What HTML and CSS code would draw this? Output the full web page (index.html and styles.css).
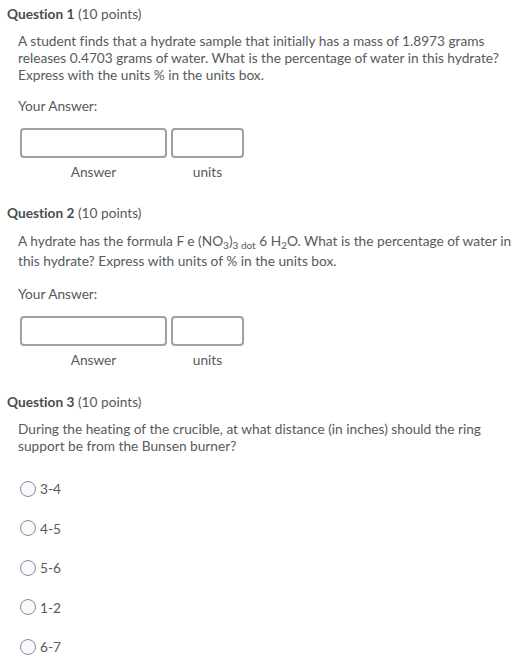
FILE: index.html
```html
<!DOCTYPE html>
<html>
<head>
<meta charset="utf-8">
<link rel="stylesheet" href="styles.css">
</head>
<body>
<div class="page">
  <section class="q q1">
    <h2 class="q-title"><b>Question 1</b> (10 points)</h2>
    <p class="q-text">A student finds that a hydrate sample that initially has a mass of 1.8973 grams releases 0.4703 grams of water. What is the percentage of water in this hydrate? Express with the units % in the units box.</p>
    <div class="your">Your Answer:</div>
    <div class="answer-row">
      <div class="field"><div class="box box-main"></div><div class="cap">Answer</div></div>
      <div class="field"><div class="box box-units"></div><div class="cap">units</div></div>
    </div>
  </section>
  <section class="q q2">
    <h2 class="q-title"><b>Question 2</b> (10 points)</h2>
    <p class="q-text tall">A hydrate has the formula F e (NO<sub>3</sub>)<sub>3 dot</sub> 6 H<sub>2</sub>O. What is the percentage of water in this hydrate? Express with units of % in the units box.</p>
    <div class="your">Your Answer:</div>
    <div class="answer-row">
      <div class="field"><div class="box box-main"></div><div class="cap">Answer</div></div>
      <div class="field"><div class="box box-units"></div><div class="cap">units</div></div>
    </div>
  </section>
  <section class="q q3">
    <h2 class="q-title"><b>Question 3</b> (10 points)</h2>
    <p class="q-text">During the heating of the crucible, at what distance (in inches) should the ring support be from the Bunsen burner?</p>
    <ul class="options">
      <li class="opt"><span class="radio"></span><span>3-4</span></li>
      <li class="opt"><span class="radio"></span><span>4-5</span></li>
      <li class="opt"><span class="radio"></span><span>5-6</span></li>
      <li class="opt"><span class="radio"></span><span>1-2</span></li>
      <li class="opt"><span class="radio"></span><span>6-7</span></li>
    </ul>
  </section>
</div>
</body>
</html>
```
FILE: styles.css
```css
html, body {
  margin: 0;
  padding: 0;
  background: #fff;
}
body {
  font-family: Lato, "Open Sans", sans-serif;
  font-size: 13.7px;
  color: #565a5c;
  font-variant-ligatures: none;
}
.page {
  padding: 5px 0 0 0;
}
.q-title {
  margin: 0;
  padding-left: 7px;
  font-size: 13.7px;
  font-weight: normal;
  line-height: 17px;
  color: #565a5c;
}
.q-title b {
  font-weight: bold;
  color: #494c4e;
}
.q-text {
  margin: 10px 0 0 0;
  padding: 0 4px 0 18px;
  line-height: 17px;
}
.q-text.tall {
  line-height: 20px;
}
.q-text sub {
  font-size: 10px;
  line-height: 0;
  vertical-align: -3px;
}
.your {
  margin: 14px 0 0 18px;
  line-height: 17px;
}
.answer-row {
  display: flex;
  gap: 4px;
  margin: 14px 0 0 20px;
}
.field {
  display: flex;
  flex-direction: column;
  align-items: center;
}
.box {
  height: 26px;
  border: 2px solid #a0a0a0;
  border-radius: 4px;
  box-sizing: content-box;
}
.box-main { width: 143px; }
.box-units { width: 69px; }
.cap {
  margin-top: 5px;
  line-height: 17px;
}
.q2 { margin-top: 24px; }
.q3 { margin-top: 25px; }
.options {
  list-style: none;
  margin: 26px 0 0 0;
  padding: 0 0 0 20px;
  display: flex;
  flex-direction: column;
  gap: 22.5px;
}
.opt {
  display: flex;
  align-items: center;
  gap: 4px;
  height: 17px;
}
.radio {
  width: 14px;
  height: 14px;
  border: 1.5px solid #8a8d90;
  border-radius: 50%;
  background: #f6f8fb;
  box-sizing: content-box;
}
```
